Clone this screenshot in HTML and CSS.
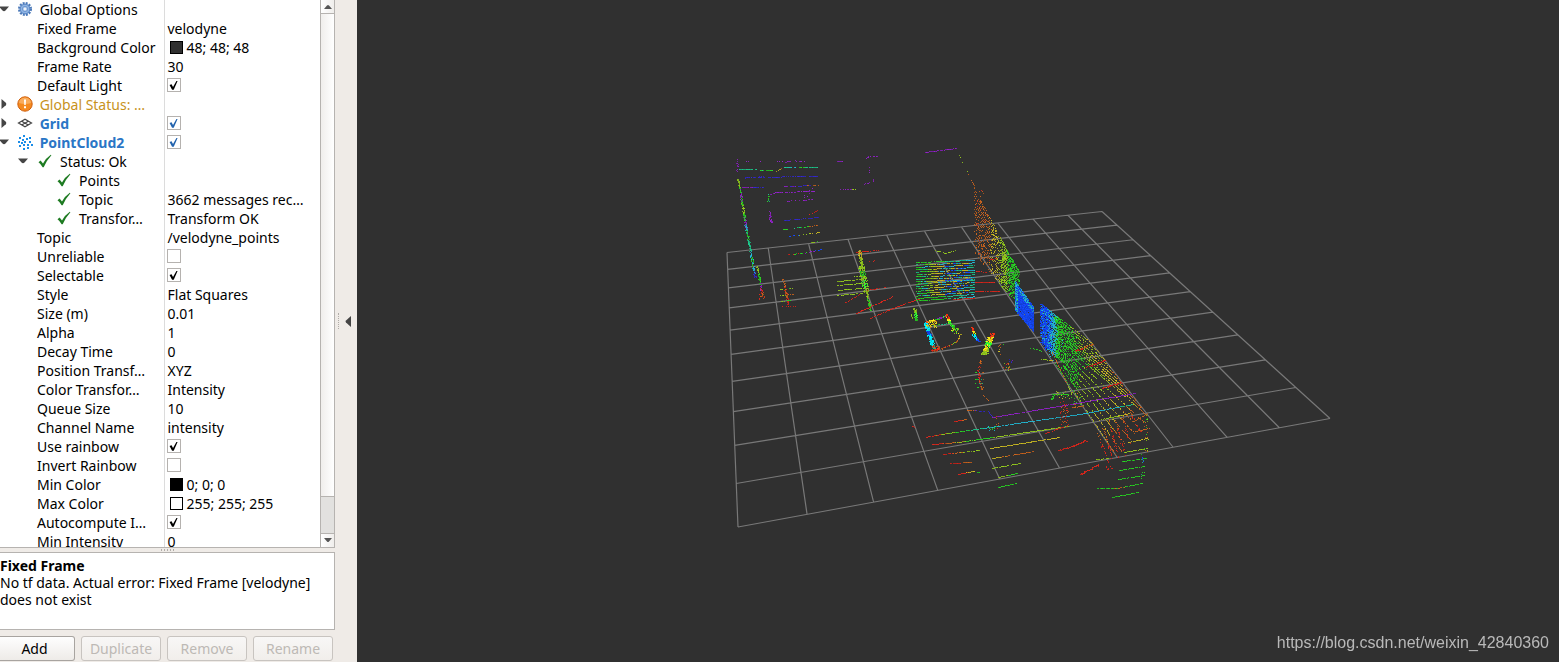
FILE: index.html
```html
<!DOCTYPE html>
<html lang="en">
<head>
  <meta charset="UTF-8">
  <title>RViz</title>
  <link rel="stylesheet" href="styles.css">
</head>
<body>
  <svg class="defs" aria-hidden="true">
    <symbol id="open" viewBox="0 0 10 10"><path d="M0 2.500h10L6.500 6.500Q5 8 3.500 6.500z" fill="#454545"/></symbol>
    <symbol id="closed" viewBox="0 0 10 10"><path d="M2.500 0v10L6.800 6.200Q8 5 6.800 3.800z" fill="#454545"/></symbol>
    <symbol id="tick" viewBox="0 0 14 14"><path d="M.5 8.300L2.600 6.600 5 9.600Q8 4 12.800.8l.6.5Q9 6 5.700 13.200H4.600Q2.800 10 .5 8.300z" fill="#1e7b22"/></symbol>
  </svg>
  <aside class="displays">
    <div class="tree">
      <table class="props">
        <colgroup><col class="col-name"><col></colgroup>
        <tbody>
          <tr><td class="top"><svg class="arrow"><use href="#open"/></svg>
            <svg class="icon" viewBox="0 0 16 16"><circle cx="8" cy="8" r="5.800" fill="none" stroke="#4a78b8" stroke-width="2.400" stroke-dasharray="1.900 1.140"/><circle cx="8" cy="8" r="4.900" fill="#8fb4e3" stroke="#4f7fc2"/><circle cx="8" cy="8" r="2.600" fill="#b9d0ee" stroke="#6c96d0"/><circle cx="8" cy="8" r="1" fill="#fff"/></svg>Global Options</td><td></td></tr>
          <tr><td>Fixed Frame</td><td>velodyne</td></tr>
          <tr><td>Background Color</td><td><span class="swatch dark"></span>48; 48; 48</td></tr>
          <tr><td>Frame Rate</td><td>30</td></tr>
          <tr><td><label for="light">Default Light</label></td><td><input type="checkbox" id="light" checked></td></tr>
          <tr><td class="top warn"><svg class="arrow"><use href="#closed"/></svg>
            <svg class="icon" viewBox="0 0 16 16"><circle cx="8" cy="8" r="7.200" fill="#f58a1f" stroke="#cf5f0c"/><path d="M2 7a6 5.500 0 0 1 12 0Q8 9 2 7z" fill="#f9ac5c"/><path d="M7 3.500h2L8.700 9H7.300zM7 10.300h2v2H7z" fill="#fff"/></svg>Global Status: …</td><td></td></tr>
          <tr><td class="top display"><svg class="arrow"><use href="#closed"/></svg>
            <svg class="icon" viewBox="0 0 16 16"><path d="M1.500 8L8 4.300 14.500 8 8 11.700zM4.700 6.200l6.600 3.700M11.300 6.200L4.700 9.900" fill="none" stroke="#454545" stroke-width="1.200"/></svg><label for="grid">Grid</label></td><td><input type="checkbox" id="grid" class="blue" checked></td></tr>
          <tr><td class="top display"><svg class="arrow"><use href="#open"/></svg>
            <svg class="icon" viewBox="0 0 16 16"><path d="M6 1h2v2H6zM2 3h2v2H2zM9 4h2v2H9zM12 3h2v2h-2zM5 5h2v2H5zM1 7h2v2H1zM4 8h2v2H4zM7 7h2v2H7zM12 7h2v2h-2zM2 11h2v2H2zM6 10h2v2H6zM10 10h2v2h-2zM14 10h2v2h-2zM6 14h2v2H6zM10 13h2v2h-2z" fill="#1b8de8"/></svg><label for="cloud">PointCloud2</label></td><td><input type="checkbox" id="cloud" class="blue" checked></td></tr>
          <tr><td class="status"><svg class="arrow"><use href="#open"/></svg><svg class="tick"><use href="#tick"/></svg>Status: Ok</td><td></td></tr>
          <tr><td class="sub"><svg class="tick"><use href="#tick"/></svg>Points</td><td></td></tr>
          <tr><td class="sub"><svg class="tick"><use href="#tick"/></svg>Topic</td><td>3662 messages rec…</td></tr>
          <tr><td class="sub"><svg class="tick"><use href="#tick"/></svg>Transfor…</td><td>Transform OK</td></tr>
          <tr><td>Topic</td><td>/velodyne_points</td></tr>
          <tr><td><label for="unreliable">Unreliable</label></td><td><input type="checkbox" id="unreliable"></td></tr>
          <tr><td><label for="selectable">Selectable</label></td><td><input type="checkbox" id="selectable" checked></td></tr>
          <tr><td>Style</td><td>Flat Squares</td></tr>
          <tr><td>Size (m)</td><td>0.01</td></tr>
          <tr><td>Alpha</td><td>1</td></tr>
          <tr><td>Decay Time</td><td>0</td></tr>
          <tr><td>Position Transf…</td><td>XYZ</td></tr>
          <tr><td>Color Transfor…</td><td>Intensity</td></tr>
          <tr><td>Queue Size</td><td>10</td></tr>
          <tr><td>Channel Name</td><td>intensity</td></tr>
          <tr><td><label for="rainbow">Use rainbow</label></td><td><input type="checkbox" id="rainbow" checked></td></tr>
          <tr><td><label for="invert">Invert Rainbow</label></td><td><input type="checkbox" id="invert"></td></tr>
          <tr><td>Min Color</td><td><span class="swatch black"></span>0; 0; 0</td></tr>
          <tr><td>Max Color</td><td><span class="swatch white"></span>255; 255; 255</td></tr>
          <tr><td><label for="auto">Autocompute I…</label></td><td><input type="checkbox" id="auto" checked></td></tr>
          <tr><td>Min Intensity</td><td>0</td></tr>
        </tbody>
      </table>
      <div class="scrollbar">
        <button class="step" aria-label="Scroll up"><svg viewBox="0 0 8 5"><path d="M0 5L3 1.500Q4 .5 5 1.500L8 5z" fill="#555"/></svg></button>
        <div class="track"><div class="thumb"></div></div>
        <button class="step down" aria-label="Scroll down"><svg viewBox="0 0 8 5"><path d="M0 0h8L5 3.500Q4 4.500 3 3.500z" fill="#555"/></svg></button>
      </div>
    </div>
    <div class="handle"></div>
    <div class="help"><b>Fixed Frame</b><br>No tf data. Actual error: Fixed Frame [velodyne] does not exist</div>
    <div class="buttons">
      <button class="btn add">Add</button>
      <button class="btn" disabled>Duplicate</button>
      <button class="btn" disabled>Remove</button>
      <button class="btn" disabled>Rename</button>
    </div>
  </aside>
  <div class="splitter">
    <div class="grip"></div>
    <button class="collapse" aria-label="Hide left panel"><svg viewBox="0 0 6 11"><path d="M6 0v11L1 6.500Q0 5.500 1 4.500z" fill="#444"/></svg></button>
  </div>
  <main class="view">
    <canvas id="scene"></canvas>
    <span class="mark">https://blog.csdn.net/weixin_42840360</span>
  </main>
  <script src="scene.js"></script>
</body>
</html>
```

FILE: styles.css
```css
* {
  box-sizing: border-box;
}
body {
  margin: 0;
  height: 100vh;
  display: flex;
  overflow: hidden;
  background: #efebe7;
  color: #000;
  font-family: "Noto Sans", "Open Sans", sans-serif;
  font-size: 14px;
}
.defs {
  display: none;
}
.displays {
  width: 335px;
  display: flex;
  flex-direction: column;
}
.tree {
  flex: 1;
  min-height: 0;
  display: flex;
  overflow: hidden;
  background: #fff;
  border-right: 1px solid #b6b3b0;
  border-bottom: 1px solid #b6b3b0;
}
.props {
  flex: 1;
  align-self: flex-start;
  table-layout: fixed;
  border-collapse: collapse;
}
.col-name {
  width: 164px;
}
.props td {
  height: 19px;
  line-height: 19px;
  padding: 0 0 0 37px;
  white-space: nowrap;
}
.props td + td {
  padding-left: 3px;
  border-left: 1px solid #dcdcdc;
}
.props td.top {
  padding-left: 0;
}
.props td.status {
  padding-left: 18px;
}
.props td.sub {
  padding-left: 57px;
}
.props svg {
  vertical-align: top;
}
.arrow {
  width: 10px;
  height: 10px;
  margin: 4px 0 0 -1px;
}
.status .arrow {
  margin: 4px 10px 0 0;
}
.icon {
  width: 16px;
  height: 16px;
  margin: 1px 7px 0 4px;
}
.tick {
  width: 14px;
  height: 14px;
  margin: 2px 8px 0 0;
}
.warn {
  color: #c8921c;
}
.display {
  color: #2a76c6;
  font-weight: bold;
}
.swatch {
  display: inline-block;
  width: 13px;
  height: 13px;
  margin: 3px 4px 0 2px;
  border: 1px solid #000;
  vertical-align: top;
}
.dark {
  background: #303030;
}
.black {
  background: #000;
}
.white {
  background: #fff;
}
input[type="checkbox"] {
  appearance: none;
  display: block;
  width: 14px;
  height: 14px;
  margin: 0 0 1px -1px;
  border: 1px solid #b5b2af;
  background: #fff;
}
input[type="checkbox"]:checked::before {
  content: "";
  display: block;
  width: 12px;
  height: 12px;
  background: #000;
  clip-path: polygon(17% 50%, 34% 44%, 46% 66%, 74% 17%, 84% 17%, 52% 90%, 38% 90%);
}
input.blue:checked::before {
  background: #2464ae;
}
.scrollbar {
  width: 14px;
  display: flex;
  flex-direction: column;
  border-left: 1px solid #b6b3b0;
}
.step {
  height: 14px;
  padding: 0;
  border: 0;
  border-bottom: 1px solid #b6b3b0;
  background: linear-gradient(90deg, #fff, #f0eeec);
  display: flex;
  align-items: center;
  justify-content: center;
}
.step.down {
  border-bottom: 0;
  border-top: 1px solid #b6b3b0;
}
.step svg {
  width: 8px;
  height: 5px;
}
.track {
  flex: 1;
  background: #e2e1df;
}
.thumb {
  height: 93%;
  border-bottom: 1px solid #b6b3b0;
  background: linear-gradient(90deg, #f0eeec, #fff);
}
.handle {
  width: 16px;
  height: 4px;
  margin: 0 auto;
  background: radial-gradient(circle, #b0aca8 1px, transparent 1px) 0 0 / 3px 4px;
}
.help {
  height: 78px;
  padding: 4px 0 0;
  line-height: 17px;
  background: #fff;
  border: 1px solid #b6b3b0;
  border-left: 0;
}
.buttons {
  display: flex;
  gap: 6px;
  padding: 6px 2px 1px 0;
}
.btn {
  flex: 1;
  height: 25px;
  padding: 0;
  font: inherit;
  color: #000;
  border: 1px solid #a8a4a0;
  border-radius: 3px;
  background: linear-gradient(#fefefe, #eeebe8);
}
.btn:disabled {
  color: #bdb9b5;
  border-color: #c8c4c0;
  background: linear-gradient(#f8f7f6, #f1eeeb);
}
.add {
  flex: 0 0 75px;
  padding-right: 5px;
  border-left: 0;
  border-radius: 0 3px 3px 0;
}
.splitter {
  width: 22px;
  padding: 0 6px 20px 3px;
  display: flex;
  align-items: center;
  justify-content: space-between;
}
.grip {
  height: 16px;
  border-left: 1px dotted #b0aca8;
}
.collapse {
  padding: 0;
  border: 0;
  background: none;
}
.collapse svg {
  display: block;
  width: 6px;
  height: 11px;
}
.view {
  flex: 1;
  min-width: 0;
  position: relative;
  background: #303030;
}
#scene {
  display: block;
  width: 100%;
  height: 100%;
}
.mark {
  position: absolute;
  right: 10px;
  bottom: 8px;
  color: #b9b9b9;
  font: 16px/22px "Liberation Sans", Arial, sans-serif;
}
```

FILE: scene.js
```js
const canvas = document.getElementById('scene');
const ctx = canvas.getContext('2d');

// rainbow of the intensity channel
const C = {
  r: [205, 38, 28], o: [190, 95, 30], y: [190, 175, 35], l: [140, 190, 30],
  g: [40, 195, 35], t: [30, 185, 130], c: [35, 175, 200], b: [20, 70, 240],
  n: [50, 40, 190], p: [135, 35, 185],
  R: [250, 50, 20], Y: [235, 225, 20], G: [50, 250, 50], T: [0, 235, 255]
};

let seed = 7;
function rnd() {
  seed = (seed * 16807) % 2147483647;
  return seed / 2147483647;
}

function dot(x, y, key) {
  const k = 0.85 + rnd() * 0.25;
  const c = C[key].map(v => Math.min(255, Math.round(v * k)));
  ctx.fillStyle = `rgb(${c})`;
  ctx.fillRect(Math.round(x), Math.round(y), 1, 1);
}

// walks along a polyline and drops points; colors run from start to end
function trail(pts, colors, density = 0.75, width = 1) {
  let total = 0;
  for (let i = 1; i < pts.length; i++) {
    total += Math.hypot(pts[i][0] - pts[i - 1][0], pts[i][1] - pts[i - 1][1]);
  }
  const passes = width > 1 ? width * 2 : 1;
  let done = 0;
  for (let i = 1; i < pts.length; i++) {
    const [x1, y1] = pts[i - 1];
    const [x2, y2] = pts[i];
    const len = Math.hypot(x2 - x1, y2 - y1);
    for (let s = 0; s < len; s++) {
      for (let w = 0; w < passes; w++) {
        const t = (done + s) / total * colors.length + (rnd() - 0.5) * 0.9;
        const key = colors[Math.max(0, Math.min(colors.length - 1, Math.floor(t)))];
        if (rnd() > density) continue;
        const off = width > 1 ? (rnd() - 0.5) * width : 0;
        dot(x1 + (x2 - x1) * s / len + off, y1 + (y2 - y1) * s / len + (width > 1 ? rnd() - 0.5 : 0), key);
      }
    }
    done += len;
  }
}

function scatter(x, y, w, h, n, colors) {
  for (let i = 0; i < n; i++) {
    dot(x + rnd() * w, y + rnd() * h, colors[Math.floor(rnd() * colors.length)]);
  }
}

// 10 x 10 ground grid, corners: far left, far right, near right, near left
function drawGrid() {
  const [x0, y0, x1, y1, x2, y2, x3, y3] = [727, 252.5, 1102, 211.5, 1330, 418.5, 738, 527];
  const dx1 = x1 - x2, dx2 = x3 - x2, sx = x0 - x1 + x2 - x3;
  const dy1 = y1 - y2, dy2 = y3 - y2, sy = y0 - y1 + y2 - y3;
  const d = dx1 * dy2 - dx2 * dy1;
  const g = (sx * dy2 - dx2 * sy) / d;
  const h = (dx1 * sy - sx * dy1) / d;
  const at = (u, v) => {
    const w = g * u + h * v + 1;
    return [((x1 - x0 + g * x1) * u + (x3 - x0 + h * x3) * v + x0) / w,
            ((y1 - y0 + g * y1) * u + (y3 - y0 + h * y3) * v + y0) / w];
  };
  ctx.strokeStyle = '#787878';
  ctx.lineWidth = 1.2;
  ctx.beginPath();
  for (let i = 0; i <= 10; i++) {
    ctx.moveTo(...at(i / 10, 0));
    ctx.lineTo(...at(i / 10, 1));
    ctx.moveTo(...at(0, i / 10));
    ctx.lineTo(...at(1, i / 10));
  }
  ctx.stroke();
}

function drawBackWall() {
  trail([[738, 161], [783, 161]], 'p', 0.2);
  trail([[783, 162], [795, 160]], 'p', 0.8);
  trail([[796, 161], [812, 161]], 'p', 0.3);
  trail([[737, 159], [737, 172]], 'p', 0.3, 2);
  trail([[739, 169], [773, 170]], 'ttg', 0.75);
  trail([[775, 171], [784, 167]], 'yo', 0.6);
  trail([[784, 167], [818, 167]], 'tcgtt', 0.75);
  trail([[745, 177], [818, 176]], 'n', 0.7);
  trail([[739, 178], [763, 176]], 'n', 0.3);
  trail([[740, 187], [764, 187]], 'pn', 0.8);
  trail([[784, 186], [818, 185]], 'pnno', 0.7);
  trail([[770, 194], [776, 192], [814, 191]], 'p', 0.75);
  trail([[782, 201], [814, 199]], 'p', 0.5);
  scatter(766, 194, 4, 8, 9, 'tg');
  scatter(803, 185, 10, 14, 7, 'op');
  trail([[769, 211], [771, 222]], 'p', 0.5, 2);
  trail([[809, 214], [818, 210]], 'r', 0.8);
  trail([[784, 220], [818, 217]], 'n', 0.7);
  trail([[783, 229], [818, 225]], 'gtgo', 0.5);
  trail([[787, 236], [820, 232]], 'bly', 0.5);
  trail([[811, 242], [820, 241]], 'lg', 0.6);
  trail([[788, 254], [803, 253], [821, 249]], 'rgpb', 0.6);
  trail([[837, 161], [843, 161]], 'p', 0.8);
  trail([[866, 158], [869, 156], [879, 156]], 'p', 0.7);
  trail([[869, 167], [869, 173]], 'p', 0.7);
  trail([[863, 184], [873, 181], [873, 178]], 'p', 0.8);
  trail([[840, 189], [857, 189]], 'ppl', 0.7);
  trail([[925, 152], [956, 148]], 'p', 0.85);
  trail([[957, 151], [975, 188]], 'lo', 0.3);
}

function drawLeftObjects() {
  trail([[738, 179], [746, 228], [755, 278]], 'lgpglgpcgttcgcn', 0.7, 2);
  trail([[757, 266], [762, 294]], 'lggpr', 0.7, 2);
  scatter(759, 290, 5, 10, 18, 'ro');
  trail([[783, 279], [788, 304]], 'oror', 0.6, 2);
  trail([[780, 289], [794, 288]], 'lgl', 0.5);
  trail([[780, 295], [793, 294]], 'lo', 0.5);
  trail([[780, 301], [793, 300]], 'lg', 0.5);
  trail([[782, 306], [796, 306]], 'r', 0.5);

  trail([[859, 250], [862, 268]], 'yll', 0.7, 3);
  trail([[861, 266], [866, 292]], 'lglGl', 0.6, 6);
  trail([[866, 290], [870, 310]], 'lg', 0.7, 2);
  trail([[856, 252], [878, 250]], 'r', 0.7);
  trail([[869, 261], [878, 260]], 'r', 0.5);
  [281, 285, 290, 295].forEach(y => trail([[837, y], [862, y - 2]], 'l', 0.8));
  trail([[853, 276], [864, 276]], 'l', 0.6);
  trail([[845, 302], [860, 294]], 'r', 0.85);
  trail([[856, 313], [893, 296]], 'r', 0.85);
  trail([[870, 318], [895, 307], [920, 298]], 'r', 0.9);
  trail([[866, 290], [885, 287]], 'r', 0.6);
}

function drawPanel() {
  for (let i = 0; i < 17; i++) {
    const y = 262 + i * 2.4;
    const colors = ['gtlyctybct', 'tglycybtyc', 'gclyybcybt'][i % 3];
    trail([[916, y], [974, y - (i < 9 ? 2 : 4)]], i === 0 || i > 14 ? 'gggttc' : colors, 0.9);
  }
  trail([[935, 250], [945, 253], [955, 250]], 'l', 0.85);
  trail([[976, 271], [986, 272]], 'r', 0.7);
  trail([[975, 282], [995, 282]], 'r', 0.9);
  trail([[975, 291], [1000, 291]], 'r', 0.8);
  trail([[953, 299], [974, 298]], 'r', 0.7);
  trail([[988, 260], [1003, 256]], 'r', 0.5);
}

function drawWall() {
  // far part: rows converge to the right
  for (let i = 0; i < 19; i++) {
    const f = i / 18;
    trail([[974, 188 + 64 * f], [995, 228 + 50 * f], [1019, 272 + 34 * f]],
      'ooooyyllggg', 0.42);
    trail([[1001, 240 + 46 * f], [1018, 270 + 32 * f]], 'llggg', 0.55);
  }
  scatter(974, 190, 10, 65, 40, 'oor');
  for (let x = 1015; x < 1034; x++) {
    const top = 281 + (x - 1015) * 1.4;
    const bottom = 311 + (x - 1015) * 1.15;
    for (let y = top; y < bottom; y++) {
      if (rnd() > 0.03) dot(x, y, y - top < 7 && rnd() > 0.5 || x < 1018 && rnd() > 0.3 ? 'c' : 'b');
    }
  }
  // near part: rows fan out
  for (let i = 0; i < 17; i++) {
    const f = i / 16;
    const end = i < 10
      ? [1093 + 55 * i / 9, 344 + 72 * i / 9]
      : [1148 - 31 * (i - 9) / 7, 416 + 41 * (i - 9) / 7];
    trail([[1041, 304 + 38 * f], end], i < 4 ? 'bcgggllly' : i < 10 ? 'bcgggllyyyo' : 'bcggglllyyoo', i < 10 ? 0.72 : 0.6);
    trail([[1041, 304 + 38 * f], [1059, 319 + 40 * f]], 'bbccg', 0.5, 2);
    trail([[1059, 319 + 40 * f], [1078, 337 + 54 * f]], 'g', 0.55);
  }
  for (let x = 1040; x < 1053; x++) {
    const top = 305 + (x - 1041) * 0.9;
    for (let y = top; y < top + 33 + (x - 1041) * 0.5; y++) {
      if (rnd() > 0.45) dot(x, y, rnd() > 0.3 ? 'b' : 'c');
    }
  }
  trail([[1052, 352], [1072, 395]], 'ool', 0.6);
  trail([[1075, 351], [1092, 344]], 'ro', 0.5, 2);
  trail([[1087, 367], [1105, 360]], 'r', 0.5, 2);
  trail([[1101, 388], [1122, 382]], 'r', 0.5, 2);
  [[1097, 433, 1108, 462], [1103, 428, 1112, 458], [1108, 418, 1118, 457],
   [1115, 420, 1125, 455], [1122, 415, 1130, 445], [1128, 408, 1140, 432]].forEach(l =>
    trail([[l[0], l[1]], [l[2], l[3]]], 'orr', 0.18, 2));
}

function drawFloor() {
  trail([[992, 417], [1047, 408], [1135, 393]], 'p', 0.95);
  trail([[925, 437], [941, 434], [962, 431], [1080, 414], [1133, 404]], 'rlgtccccccccct', 0.9);
  trail([[932, 444], [958, 442], [1068, 426]], 'rolggllllll', 0.9);
  trail([[990, 448], [1060, 437]], 'y', 0.95);
  trail([[992, 458], [1034, 451]], 'yooo', 0.9);
  trail([[943, 454], [979, 450]], 'roll', 0.75);
  trail([[950, 463], [971, 462]], 'ro', 0.85);
  trail([[958, 474], [973, 471], [980, 472]], 'ryg', 0.8);
  trail([[992, 468], [1020, 463]], 'l', 0.9);
  trail([[998, 477], [1017, 473]], 'lg', 0.9);
  trail([[998, 487], [1016, 483]], 'g', 0.9);
  trail([[954, 421], [966, 419]], 'ro', 0.8);
  trail([[967, 410], [988, 411], [992, 416]], 'onnn', 0.75);
  scatter(912, 425, 2, 2, 3, 'r');
  scatter(988, 426, 8, 4, 14, 'gc');
  scatter(995, 415, 3, 13, 6, 'or');

  trail([[1052, 399], [1053, 394], [1069, 394]], 'g', 0.6, 2);
  scatter(1055, 391, 14, 8, 18, 'gly');
  scatter(1060, 400, 8, 26, 42, 'rro');
  scatter(1070, 392, 10, 14, 18, 'og');
  trail([[1072, 407], [1083, 406]], 'o', 0.9);
  trail([[1045, 433], [1068, 425]], 'r', 0.75);
  trail([[1059, 450], [1075, 445], [1086, 440]], 'r', 0.5, 2);
  trail([[1080, 474], [1091, 469], [1099, 463]], 'r', 0.5, 2);
  scatter(1098, 465, 14, 4, 10, 'r');

  trail([[1101, 419], [1130, 413]], 'lly', 0.9);
  trail([[1133, 421], [1148, 413]], 'o', 0.9);
  trail([[1135, 431], [1149, 428]], 'o', 0.9);
  trail([[1128, 442], [1147, 438]], 'y', 0.9);
  trail([[1124, 452], [1147, 448]], 'l', 0.9);
  trail([[1096, 459], [1108, 458]], 'l', 0.9);
  trail([[1122, 461], [1146, 458]], 'g', 0.9);
  trail([[1119, 470], [1144, 466]], 'g', 0.9);
  trail([[1118, 479], [1144, 475]], 'g', 0.9);
  trail([[1097, 488], [1117, 488], [1142, 483]], 'gggoggg', 0.9);
  trail([[1112, 497], [1138, 492]], 'g', 0.9);
  scatter(1144, 414, 4, 38, 24, 'gol');
  scatter(1141, 452, 3, 26, 12, 'gbt');
}

function drawObjects() {
  trail([[914, 308], [916, 320]], 'lGg', 0.7, 3);
  trail([[911, 314], [912, 319]], 'l', 0.8);

  // chair
  trail([[925, 322], [929, 335], [934, 349]], 'TTbTTt', 0.9, 4);
  trail([[926, 322], [936, 319], [947, 315]], 'RYgpG', 0.7, 3);
  scatter(926, 320, 10, 7, 60, 'YYyo');
  trail([[933, 325], [950, 323]], 'gt', 0.7);
  trail([[946, 314], [949, 322], [954, 328]], 'RYGg', 0.7, 3);
  scatter(951, 328, 7, 6, 24, 'GlY');
  trail([[960, 334], [957, 341], [945, 347], [935, 350]], 'yolror', 0.4, 2);
  scatter(931, 345, 9, 6, 30, 'Ror');

  trail([[972, 327], [975, 336]], 'RYG', 0.8, 2);
  trail([[973, 334], [979, 342]], 'Tb', 0.9, 3);
  trail([[992, 333], [990, 340]], 'Ro', 0.8, 4);
  trail([[990, 337], [984, 354]], 'YGYl', 1, 6);
  trail([[981, 360], [978, 370], [981, 389]], 'orro', 0.5, 2);
  [372, 379, 383, 387].forEach(y => trail([[975, y], [984, y]], 'gto', 0.6));
  trail([[983, 395], [989, 401]], 'o', 0.8);
  trail([[997, 347], [1000, 344], [1005, 344]], 'og', 0.8);
  scatter(998, 346, 3, 9, 7, 'oy');
  scatter(1003, 362, 7, 8, 18, 'rol');
  scatter(1008, 358, 4, 5, 6, 'np');
  trail([[1029, 348], [1037, 349], [1043, 352]], 'g', 0.7);
  trail([[1041, 359], [1052, 360]], 'ly', 0.9);
}

function draw() {
  canvas.width = canvas.clientWidth;
  canvas.height = canvas.clientHeight;
  seed = 7;
  // scene is modelled around (958, 331)
  ctx.translate(Math.round(canvas.width / 2) - 958, Math.round(canvas.height / 2) - 331);
  drawGrid();
  drawBackWall();
  drawLeftObjects();
  drawPanel();
  drawWall();
  drawFloor();
  drawObjects();
}

window.addEventListener('resize', draw);
draw();
```
